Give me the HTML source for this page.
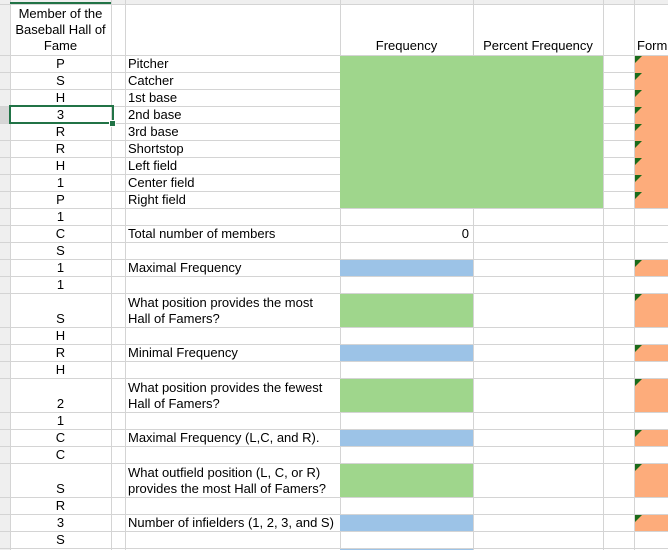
<!DOCTYPE html>
<html><head><meta charset="utf-8"><style>
body{margin:0;width:668px;height:550px;overflow:hidden;background:#fff;font-family:"Liberation Sans",Arial,sans-serif;font-size:13px;color:#000;position:relative}
div{position:absolute}
.v{top:0;height:550px;width:1px;background:#d4d4d4}
.h{left:0;width:668px;height:1px;background:#d4d4d4}
.t{line-height:14px;white-space:nowrap}
.c{text-align:center}
.g{background:#9fd68c}.b{background:#9cc3e7}.o{background:#fdac7b}
.tri{width:0;height:0;border-top:7px solid #1a6b1a;border-right:7px solid transparent}
</style></head><body>
<div style="left:0;top:0;width:10px;height:550px;background:#efefef"></div>
<div style="left:0;top:106px;width:10px;height:17px;background:#d6d6d6"></div>
<div style="left:0;top:0;width:668px;height:4px;background:#efefef"></div>

<!-- grid -->
<div class="v" style="left:10px"></div><div class="v" style="left:111px"></div><div class="v" style="left:125px"></div>
<div class="v" style="left:340px"></div><div class="v" style="left:473px"></div><div class="v" style="left:603px"></div><div class="v" style="left:634px"></div>
<div class="h" style="top:4px"></div><div class="h" style="top:55px"></div>
<div class="h" style="top:72px"></div><div class="h" style="top:89px"></div><div class="h" style="top:106px"></div><div class="h" style="top:123px"></div><div class="h" style="top:140px"></div><div class="h" style="top:157px"></div><div class="h" style="top:174px"></div><div class="h" style="top:191px"></div><div class="h" style="top:208px"></div><div class="h" style="top:225px"></div><div class="h" style="top:242px"></div><div class="h" style="top:259px"></div><div class="h" style="top:276px"></div><div class="h" style="top:293px"></div><div class="h" style="top:327px"></div><div class="h" style="top:344px"></div><div class="h" style="top:361px"></div><div class="h" style="top:378px"></div><div class="h" style="top:412px"></div><div class="h" style="top:429px"></div><div class="h" style="top:446px"></div><div class="h" style="top:463px"></div><div class="h" style="top:497px"></div><div class="h" style="top:514px"></div><div class="h" style="top:531px"></div><div class="h" style="top:548px"></div>
<div style="left:10px;top:2px;width:101px;height:2px;background:#217346"></div>

<!-- fills -->
<div class="g" style="left:340px;top:56px;width:263px;height:152px"></div>
<div class="b" style="left:340px;top:260px;width:133px;height:16px"></div>
<div class="g" style="left:340px;top:294px;width:133px;height:33px"></div>
<div class="b" style="left:340px;top:345px;width:133px;height:16px"></div>
<div class="g" style="left:340px;top:379px;width:133px;height:33px"></div>
<div class="b" style="left:340px;top:430px;width:133px;height:16px"></div>
<div class="g" style="left:340px;top:464px;width:133px;height:33px"></div>
<div class="b" style="left:340px;top:515px;width:133px;height:16px"></div>
<div class="b" style="left:340px;top:549px;width:133px;height:1px"></div>
<div class="o" style="left:635px;top:56px;width:33px;height:152px"></div>
<div class="o" style="left:635px;top:260px;width:33px;height:16px"></div>
<div class="o" style="left:635px;top:294px;width:33px;height:33px"></div>
<div class="o" style="left:635px;top:345px;width:33px;height:16px"></div>
<div class="o" style="left:635px;top:379px;width:33px;height:33px"></div>
<div class="o" style="left:635px;top:430px;width:33px;height:16px"></div>
<div class="o" style="left:635px;top:464px;width:33px;height:33px"></div>
<div class="o" style="left:635px;top:515px;width:33px;height:16px"></div>

<!-- triangles -->
<div class="tri" style="left:635px;top:56px"></div><div class="tri" style="left:635px;top:73px"></div><div class="tri" style="left:635px;top:90px"></div><div class="tri" style="left:635px;top:107px"></div><div class="tri" style="left:635px;top:124px"></div><div class="tri" style="left:635px;top:141px"></div><div class="tri" style="left:635px;top:158px"></div><div class="tri" style="left:635px;top:175px"></div><div class="tri" style="left:635px;top:192px"></div>
<div class="tri" style="left:635px;top:260px"></div><div class="tri" style="left:635px;top:294px"></div><div class="tri" style="left:635px;top:345px"></div><div class="tri" style="left:635px;top:379px"></div><div class="tri" style="left:635px;top:430px"></div><div class="tri" style="left:635px;top:464px"></div><div class="tri" style="left:635px;top:515px"></div>

<!-- headers -->
<div class="t c" style="left:10px;top:6px;width:101px;line-height:16px">Member of the<br>Baseball Hall of<br>Fame</div>
<div class="t c" style="left:340px;top:39px;width:133px">Frequency</div>
<div class="t c" style="left:473px;top:39px;width:130px">Percent Frequency</div>
<div class="t" style="left:637px;top:39px">Form</div>

<!-- column A -->
<div class="t c" style="left:10px;top:55px;width:101px;line-height:17px">P<br>S<br>H<br>3<br>R<br>R<br>H<br>1<br>P<br>1<br>C<br>S<br>1<br>1</div>
<div class="t c" style="left:10px;top:310px;width:101px;line-height:17px">S<br>H<br>R<br>H</div>
<div class="t c" style="left:10px;top:395px;width:101px;line-height:17px">2<br>1<br>C<br>C</div>
<div class="t c" style="left:10px;top:480px;width:101px;line-height:17px">S<br>R<br>3<br>S</div>
<div style="left:9px;top:105px;width:101px;height:15px;border:2px solid #217346"></div>
<div style="left:109px;top:120px;width:5px;height:5px;background:#217346;border:1px solid #fff"></div>

<!-- column B -->
<div class="t" style="left:128px;top:55px;line-height:17px">Pitcher<br>Catcher<br>1st base<br>2nd base<br>3rd base<br>Shortstop<br>Left field<br>Center field<br>Right field</div>
<div class="t" style="left:128px;top:225px;line-height:17px">Total number of members</div>
<div class="t" style="left:128px;top:259px;line-height:17px">Maximal Frequency</div>
<div class="t" style="left:128px;top:295px;line-height:16px">What position provides the most<br>Hall of Famers?</div>
<div class="t" style="left:128px;top:344px;line-height:17px">Minimal Frequency</div>
<div class="t" style="left:128px;top:380px;line-height:16px">What position provides the fewest<br>Hall of Famers?</div>
<div class="t" style="left:128px;top:429px;line-height:17px">Maximal Frequency (L,C, and R).</div>
<div class="t" style="left:128px;top:465px;line-height:16px">What outfield position (L, C, or R)<br>provides the most Hall of Famers?</div>
<div class="t" style="left:128px;top:514px;line-height:17px">Number of infielders (1, 2, 3, and S)</div>
<div class="t" style="left:340px;top:225px;width:129px;text-align:right;line-height:17px">0</div>
</body></html>
